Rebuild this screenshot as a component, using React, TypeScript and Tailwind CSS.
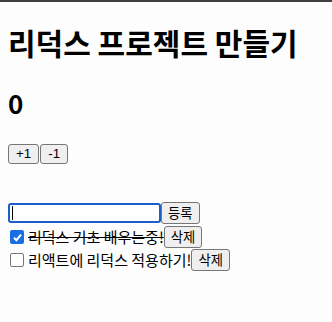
import React from "react";

export default function App() {
  const ko = { fontFamily: '"Noto Sans CJK KR", "Liberation Sans", sans-serif' };
  const btn = "h-[22px] px-[6px] text-[13.33px] leading-none bg-[#efefef] border border-[#767676] rounded-[3px]";
  return (
    <div className="w-[332px] h-[322px] bg-[#fdfdfd] text-black" style={ko}>
      <div className="h-[2px] bg-[#404040]" />
      <div className="px-[8px]">
        <h1 className="mt-[21px] h-[38px] leading-[38px] text-[30px] font-bold">리덕스 프로젝트 만들기</h1>
        <h2 className="mt-[25px] h-[34px] leading-[34px] text-[26px] font-bold">0</h2>
        <div className="mt-[24px] flex">
          <button className="h-[20px] px-[7px] text-[13.33px] leading-none bg-[#efefef] border border-[#767676] rounded-[3px]" style={{ fontFamily: '"Liberation Sans", sans-serif' }}>+1</button>
          <button className="ml-[1px] h-[20px] px-[7px] text-[13.33px] leading-none bg-[#efefef] border border-[#767676] rounded-[3px]" style={{ fontFamily: '"Liberation Sans", sans-serif' }}>-1</button>
        </div>
        <div className="mt-[38px] flex items-center">
          <div className="w-[153px] h-[20px] border-2 border-[#1a5fc8] rounded-[3px] bg-white flex items-center pl-[2px]">
            <div className="w-px h-[14px] bg-black" />
          </div>
          <button className={btn}>등록</button>
        </div>
        <div className="mt-[2px] flex items-center h-[22px]">
          <div className="ml-[2px] w-[14px] h-[14px] rounded-[2px] bg-[#1a6fe0] flex items-center justify-center">
            <svg width="11" height="11" viewBox="0 0 12 12"><path d="M2.2 6.3 L4.8 8.9 L9.8 2.8" stroke="white" strokeWidth="2.2" fill="none" /></svg>
          </div>
          <span className="ml-[4px] text-[15px] line-through">리덕스 기초 배우는중!</span>
          <button className={btn}>삭제</button>
        </div>
        <div className="mt-[1px] flex items-center h-[22px]">
          <div className="ml-[2px] w-[14px] h-[14px] rounded-[2px] bg-white border border-[#767676]" />
          <span className="ml-[4px] text-[15px]">리액트에 리덕스 적용하기!</span>
          <button className={btn}>삭제</button>
        </div>
      </div>
    </div>
  );
}
